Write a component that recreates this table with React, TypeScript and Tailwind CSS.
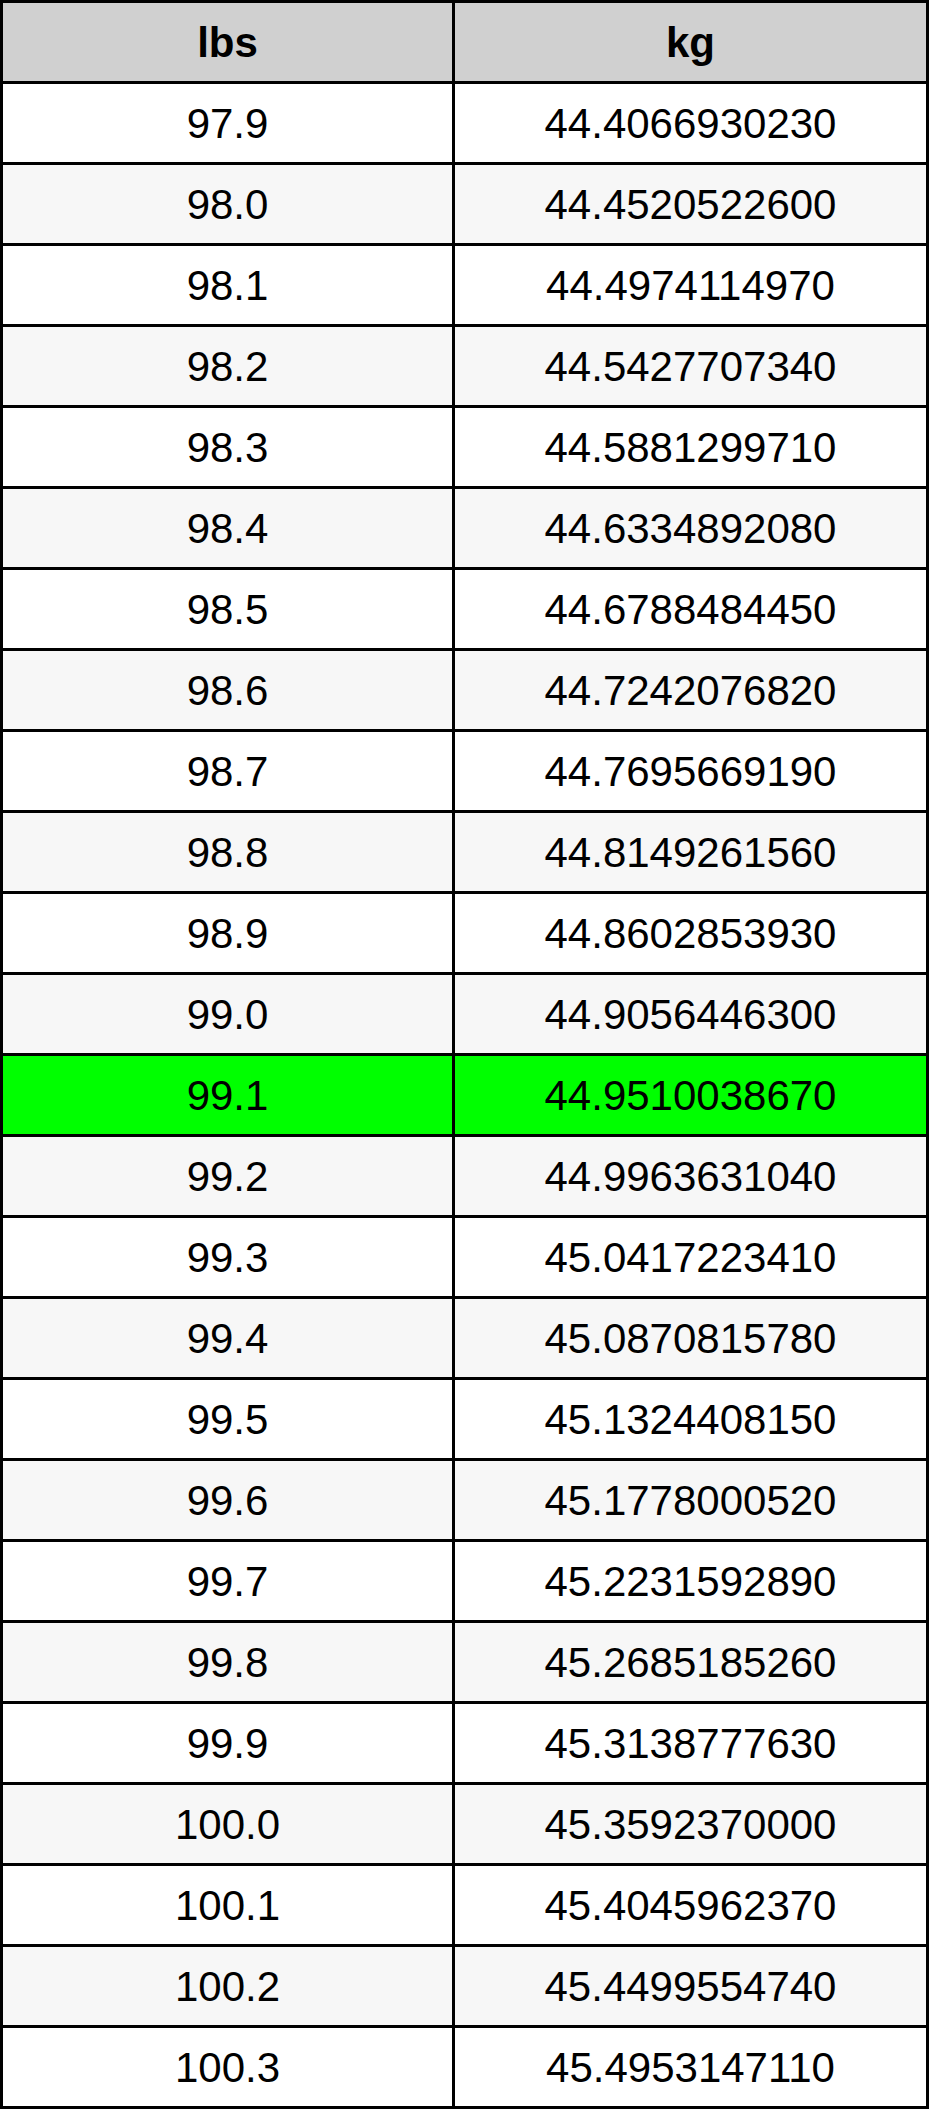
import React from "react";

const rows: [string, string][] = [
  ["97.9", "44.4066930230"],
  ["98.0", "44.4520522600"],
  ["98.1", "44.4974114970"],
  ["98.2", "44.5427707340"],
  ["98.3", "44.5881299710"],
  ["98.4", "44.6334892080"],
  ["98.5", "44.6788484450"],
  ["98.6", "44.7242076820"],
  ["98.7", "44.7695669190"],
  ["98.8", "44.8149261560"],
  ["98.9", "44.8602853930"],
  ["99.0", "44.9056446300"],
  ["99.1", "44.9510038670"],
  ["99.2", "44.9963631040"],
  ["99.3", "45.0417223410"],
  ["99.4", "45.0870815780"],
  ["99.5", "45.1324408150"],
  ["99.6", "45.1778000520"],
  ["99.7", "45.2231592890"],
  ["99.8", "45.2685185260"],
  ["99.9", "45.3138777630"],
  ["100.0", "45.3592370000"],
  ["100.1", "45.4045962370"],
  ["100.2", "45.4499554740"],
  ["100.3", "45.4953147110"],
];

export default function App() {
  return (
    <div className="bg-white w-[930px] min-h-[2115px] font-['Liberation_Sans',Arial,sans-serif] text-black">
      <div className="w-[929px] bg-black p-[3px] grid grid-cols-[449px_471px] gap-[3px]">
        <div className="h-[78px] bg-[#d0d0d0] flex items-center justify-center text-[42px] font-bold">lbs</div>
        <div className="h-[78px] bg-[#d0d0d0] flex items-center justify-center text-[42px] font-bold">kg</div>
        {rows.map(([a, b], i) => {
          const bg =
            a === "99.1" ? "bg-[#00ff00]" : i % 2 === 1 ? "bg-[#f7f7f7]" : "bg-white";
          return (
            <React.Fragment key={a}>
              <div className={`h-[78px] ${bg} flex items-center justify-center text-[42px]`}>{a}</div>
              <div className={`h-[78px] ${bg} flex items-center justify-center text-[42px]`}>{b}</div>
            </React.Fragment>
          );
        })}
      </div>
    </div>
  );
}
